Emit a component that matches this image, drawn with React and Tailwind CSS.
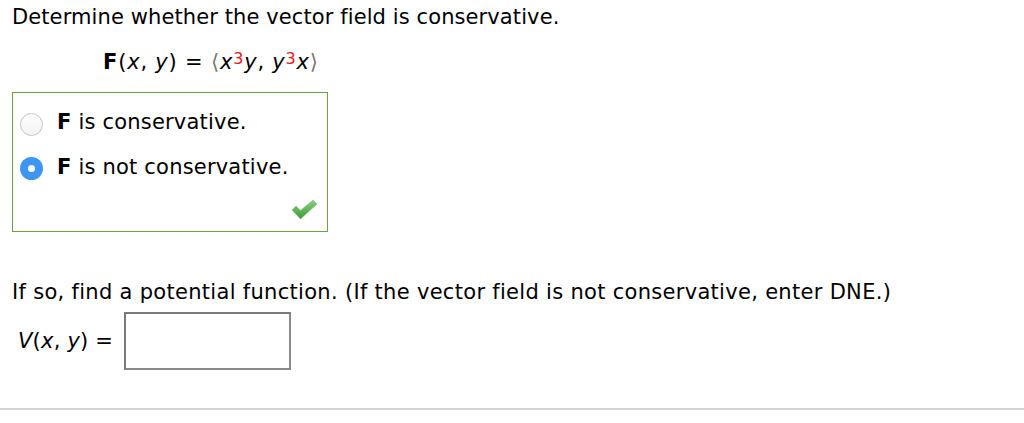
import React from "react";

function Radio({ checked }) {
  if (checked) {
    return (
      <span className="mt-[2px] flex h-[23px] w-[23px] shrink-0 items-center justify-center rounded-full bg-[#3d95f4]">
        <span className="h-[7px] w-[7px] rounded-full bg-white" />
      </span>
    );
  }
  return (
    <span className="mt-[3px] h-[23px] w-[23px] shrink-0 rounded-full border border-[#c4c4c4] bg-gradient-to-b from-white to-[#f2f2f2]" />
  );
}

function Check() {
  return (
    <svg width="27" height="21" viewBox="0 0 27 21">
      <defs>
        <linearGradient id="cg" x1="0" y1="0" x2="0" y2="1">
          <stop offset="0" stopColor="#86d27a" />
          <stop offset="1" stopColor="#3e9a3d" />
        </linearGradient>
      </defs>
      <path
        d="M1 11 L5 7 L9.5 11.5 L22 1 L26 5 L9.5 20 Z"
        fill="url(#cg)"
        stroke="#6fbf66"
        strokeOpacity="0.5"
        strokeWidth="1"
        strokeLinejoin="round"
      />
    </svg>
  );
}

export default function App() {
  return (
    <div
      className="relative h-[423px] w-[1024px] overflow-hidden bg-white text-black"
      style={{ fontFamily: '"DejaVu Sans", Verdana, sans-serif' }}
    >
      <div className="pl-[12px] pt-[5px] text-[21px] leading-[24px] tracking-[0.1px]">
        Determine whether the vector field is conservative.
      </div>
      <div className="mt-[21px] h-[24px] overflow-visible whitespace-nowrap pl-[103px] text-[21px] leading-[24px] tracking-[0.8px]">
        <span className="font-bold">F</span>(<i>x</i>, <i>y</i>) ={" "}
        <span className="text-[#777]">⟨</span>
        <i>x</i>
        <span className="relative top-[-5px] text-[16px] leading-[0] text-[#e8151d]">3</span>
        <i>y</i>, <i>y</i>
        <span className="relative top-[-5px] text-[16px] leading-[0] text-[#e8151d]">3</span>
        <i>x</i>
        <span className="text-[#777]">⟩</span>
      </div>
      <div className="ml-[12px] mt-[18px] flex h-[140px] w-[316px] flex-col border border-[#6aa43f] pl-[7px] pt-[17px]">
        <div className="flex h-[24px] items-start gap-[14px] text-[21px] leading-[24px] tracking-[0.2px]">
          <Radio />
          <span>
            <b>F</b> is conservative.
          </span>
        </div>
        <div className="mt-[21px] flex h-[24px] items-start gap-[14px] text-[21px] leading-[24px] tracking-[0.2px]">
          <Radio checked />
          <span>
            <b>F</b> is not conservative.
          </span>
        </div>
        <div className="mt-auto flex justify-end pb-[11px] pr-[9px]">
          <Check />
        </div>
      </div>
      <div className="mt-[48px] pl-[12px] text-[21px] leading-[24px] tracking-[0.3px]">
        If so, find a potential function. (If the vector field is not conservative, enter DNE.)
      </div>
      <div className="mt-[8px] flex items-center pl-[18px] text-[21px] leading-[24px] tracking-[0.2px]">
        <span>
          <i>V</i>(<i>x</i>, <i>y</i>) =
        </span>
        <div className="ml-[11px] h-[58px] w-[167px] border-2 border-t-[#7a7a7a] border-l-[#7a7a7a] border-r-[#8a8a8a] border-b-[#8a8a8a] bg-white" />
      </div>
      <div className="mt-[38px] h-[2px] w-full bg-[#d4d4d4]" />
    </div>
  );
}
